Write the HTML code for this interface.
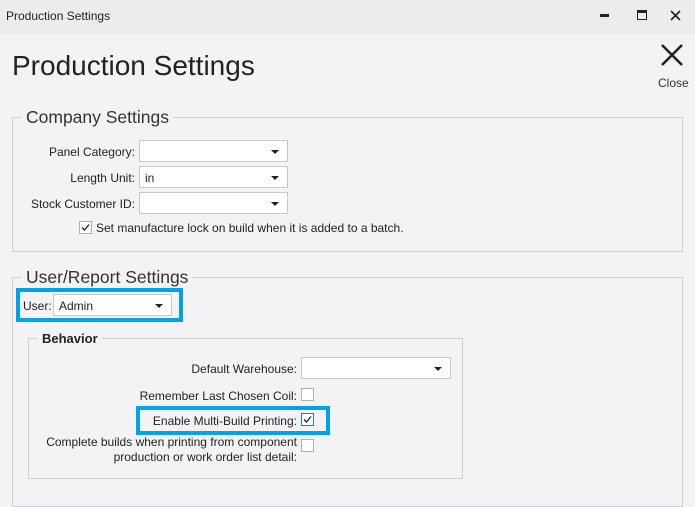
<!DOCTYPE html>
<html><head><style>
*{box-sizing:border-box;margin:0;padding:0}
body{width:695px;height:488px;overflow:hidden;background:#f3f3f5;font-family:"Liberation Sans",sans-serif;color:#222;position:relative;font-size:12px}
.a{position:absolute}
.tb{left:0;top:0;width:695px;height:34px;background:#ececec}
.fs{border:1px solid #cfcfd6}
.lg{background:#f3f3f5;padding:0 4px;font-size:17.5px;color:#333;line-height:22px}
.cb{background:#fff;border:1px solid #c8c8cc;height:22px}
.cb:after{content:"";position:absolute;right:8px;top:9px;border-left:4px solid transparent;border-right:4px solid transparent;border-top:4px solid #222}
.lb{text-align:right;font-size:12px;white-space:nowrap}
.ck{width:13px;height:13px;border:1px solid #b0b0b8;background:#fff}
.blue{border:4px solid #00a3e8}
</style></head><body>
<div class="a tb"></div>
<div class="a" style="left:6px;top:9px;font-size:12px">Production Settings</div>
<div class="a" style="left:600px;top:14px;width:9px;height:3px;background:#222"></div>
<div class="a" style="left:637px;top:10px;width:10px;height:10px;border:1.5px solid #222;border-top-width:3px"></div>
<svg class="a" style="left:670px;top:10px" width="11" height="11"><path d="M1 1L10 10M10 1L1 10" stroke="#222" stroke-width="1.6"/></svg>
<div class="a" style="left:12px;top:50px;font-size:28px;color:#222">Production Settings</div>
<svg class="a" style="left:661px;top:44px" width="22" height="22"><path d="M1 1L21 21M21 1L1 21" stroke="#222" stroke-width="2.5"/></svg>
<div class="a" style="left:658px;top:76px;font-size:12px;color:#333">Close</div>

<div class="a fs" style="left:12px;top:117px;width:671px;height:135px"></div>
<div class="a lg" style="left:22px;top:106px">Company Settings</div>
<div class="a lb" style="right:560px;top:145px">Panel Category:</div>
<div class="a cb" style="left:139px;top:140px;width:149px"></div>
<div class="a lb" style="right:560px;top:171px">Length Unit:</div>
<div class="a cb" style="left:139px;top:166px;width:149px"><span style="position:absolute;left:5px;top:4px">in</span></div>
<div class="a lb" style="right:560px;top:197px">Stock Customer ID:</div>
<div class="a cb" style="left:139px;top:192px;width:149px"></div>
<div class="a ck" style="left:79px;top:221px"><svg width="11" height="11" style="position:absolute;left:0;top:0"><path d="M2 5.5L4.5 8L9 2.5" stroke="#222" stroke-width="1.3" fill="none"/></svg></div>
<div class="a" style="left:96px;top:221px">Set manufacture lock on build when it is added to a batch.</div>

<div class="a fs" style="left:12px;top:277px;width:671px;height:230px"></div>
<div class="a lg" style="left:22px;top:266px">User/Report Settings</div>
<div class="a blue" style="left:16px;top:288px;width:167px;height:34px"></div>
<div class="a" style="left:23px;top:299px">User:</div>
<div class="a cb" style="left:53px;top:294px;width:119px"><span style="position:absolute;left:5px;top:4px">Admin</span></div>

<div class="a fs" style="left:28px;top:338px;width:435px;height:141px"></div>
<div class="a" style="left:38px;top:331px;padding:0 4px;background:#f3f3f5;font-weight:bold;font-size:13px">Behavior</div>
<div class="a lb" style="right:398px;top:362px">Default Warehouse:</div>
<div class="a cb" style="left:301px;top:357px;width:150px"></div>
<div class="a lb" style="right:398px;top:389px">Remember Last Chosen Coil:</div>
<div class="a ck" style="left:301px;top:388px"></div>
<div class="a blue" style="left:136px;top:406px;width:194px;height:29px"></div>
<div class="a lb" style="right:398px;top:414px">Enable Multi-Build Printing:</div>
<div class="a ck" style="left:301px;top:413px;border-color:#1a7fd0"><svg width="11" height="11" style="position:absolute;left:0;top:0"><path d="M2 5.5L4.5 8L9 2.5" stroke="#222" stroke-width="1.3" fill="none"/></svg></div>
<div class="a lb" style="right:398px;top:435px;line-height:15px">Complete builds when printing from component<br>production or work order list detail:</div>
<div class="a ck" style="left:301px;top:439px"></div>
</body></html>
